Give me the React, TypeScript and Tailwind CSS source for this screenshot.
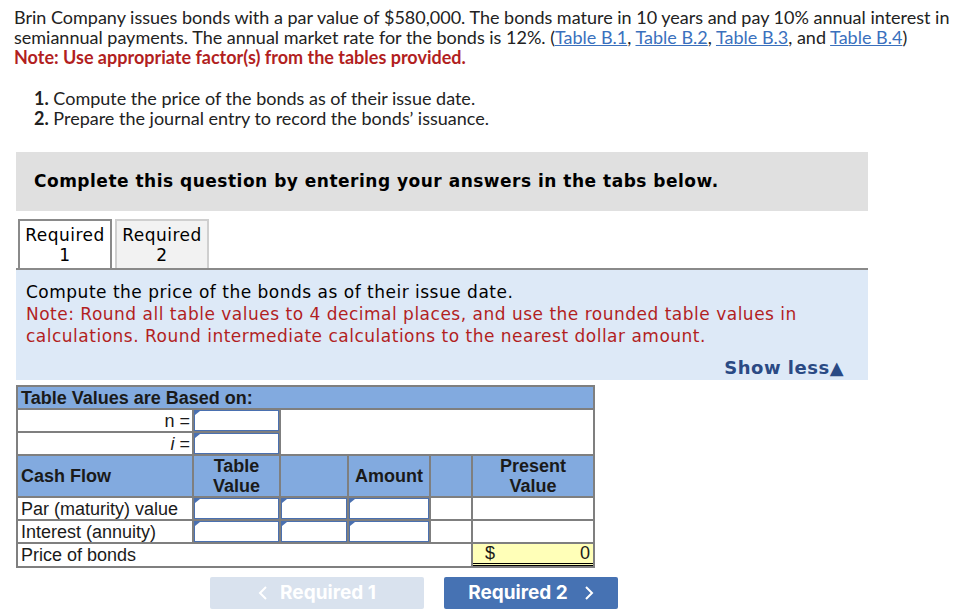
import React from "react";

const Input = () => (
  <div className="relative h-[21px] w-full border border-[#4a70b0] bg-white">
    <span className="absolute left-0 top-0 h-0 w-0 border-l-[5px] border-b-[4px] border-t-0 border-l-[#4a70b0] border-b-transparent border-t-transparent" />
  </div>
);

export default function App() {
  const cell = "border-2 border-[#7f7f7f] p-0";
  const arial = { fontFamily: '"Liberation Sans", Arial, sans-serif' };
  const verdana = { fontFamily: '"DejaVu Sans", Verdana, sans-serif', letterSpacing: "0.5px" };

  return (
    <div className="min-h-[616px] w-[964px] bg-white text-[#222]">
      {/* Question text */}
      <div className="px-[14px] pt-[7px] text-[18px] leading-[20px]" style={{ fontFamily: "Lato, sans-serif" }}>
        <p className="whitespace-nowrap">
          Brin Company issues bonds with a par value of $580,000. The bonds mature in 10 years and pay 10% annual interest in
          <br />
          semiannual payments. The annual market rate for the bonds is 12%. (
          <a className="text-[#3a70bd] underline">Table B.1</a>,{" "}
          <a className="text-[#3a70bd] underline">Table B.2</a>,{" "}
          <a className="text-[#3a70bd] underline">Table B.3</a>, and{" "}
          <a className="text-[#3a70bd] underline">Table B.4</a>)
        </p>
        <p className="font-bold text-[#b21f1f]">Note: Use appropriate factor(s) from the tables provided.</p>

        <ol className="mt-[21px] pl-[20px]">
          <li>
            <span className="font-bold">1.</span> Compute the price of the bonds as of their issue date.
          </li>
          <li>
            <span className="font-bold">2.</span> Prepare the journal entry to record the bonds’ issuance.
          </li>
        </ol>
      </div>

      <div className="pl-4" style={verdana}>
        {/* Instruction box */}
        <div className="mt-[24px] flex h-[59px] w-[852px] items-center bg-[#e0e0e0] pl-[18px] text-[17px] font-bold text-black">
          Complete this question by entering your answers in the tabs below.
        </div>

        {/* Tabs */}
        <div className="mt-[8px] flex w-[852px] gap-[3px] border-b-2 border-[#8a8a8a] pl-[2px]">
          <div className="flex h-[49px] w-[94px] flex-col items-center justify-center border-2 border-b-0 border-[#8a8a8a] bg-white text-[17px] leading-[20px] text-black">
            <span>Required</span>
            <span>1</span>
          </div>
          <div className="flex h-[49px] w-[94px] flex-col items-center justify-center border-2 border-b-0 border-[#cfcfcf] bg-[#f2f2f2] text-[17px] leading-[20px] text-black">
            <span>Required</span>
            <span>2</span>
          </div>
        </div>

        {/* Blue panel */}
        <div className="w-[852px] bg-[#dde9f7] px-[10px] pt-[11px] pb-[1px] text-[17px] leading-[22px]">
          <p className="text-black">Compute the price of the bonds as of their issue date.</p>
          <p className="text-[#b21f1f]">
            Note: Round all table values to 4 decimal places, and use the rounded table values in
            <br />
            calculations. Round intermediate calculations to the nearest dollar amount.
          </p>
          <div className="mt-[10px] flex justify-end pr-[14px] text-[18px] font-bold text-[#2a4a84]">Show less▲</div>
        </div>
      </div>

      {/* Table */}
      <div className="mt-[5px] pl-4" style={arial}>
        <table className="w-[577px] table-fixed border-collapse text-[18px] leading-[20px] text-[#1a1a1a]">
          <colgroup>
            <col className="w-[176px]" />
            <col className="w-[87px]" />
            <col className="w-[68px]" />
            <col className="w-[82px]" />
            <col className="w-[42px]" />
            <col className="w-[122px]" />
          </colgroup>
          <tbody>
            <tr className="h-[23px] bg-[#82aadf]">
              <td colSpan={6} className={`${cell} px-[3px] font-bold`}>
                Table Values are Based on:
              </td>
            </tr>
            <tr className="h-[23px]">
              <td className={`${cell} pr-[2px] text-right`}>n =</td>
              <td className={`${cell}`}>
                <Input />
              </td>
              <td colSpan={4} rowSpan={2} className={cell}></td>
            </tr>
            <tr className="h-[23px]">
              <td className={`${cell} pr-[2px] text-right`}>
                <i>i</i> =
              </td>
              <td className={`${cell}`}>
                <Input />
              </td>
            </tr>
            <tr className="h-[42px] bg-[#82aadf] font-bold">
              <td className={`${cell} px-[3px]`}>Cash Flow</td>
              <td className={`${cell} text-center`}>
                Table
                <br />
                Value
              </td>
              <td className={cell}></td>
              <td className={`${cell} text-center`}>Amount</td>
              <td className={cell}></td>
              <td className={`${cell} text-center`}>
                Present
                <br />
                Value
              </td>
            </tr>
            <tr className="h-[23px]">
              <td className={`${cell} px-[3px] whitespace-nowrap`}>Par (maturity) value</td>
              <td className={cell}>
                <Input />
              </td>
              <td className={cell}>
                <Input />
              </td>
              <td className={cell}>
                <Input />
              </td>
              <td className={cell}></td>
              <td className={cell}></td>
            </tr>
            <tr className="h-[23px]">
              <td className={`${cell} px-[3px]`}>Interest (annuity)</td>
              <td className={cell}>
                <Input />
              </td>
              <td className={cell}>
                <Input />
              </td>
              <td className={cell}>
                <Input />
              </td>
              <td className={cell}></td>
              <td className={cell}></td>
            </tr>
            <tr className="h-[23px]">
              <td colSpan={5} className={`${cell} px-[3px]`}>
                Price of bonds
              </td>
              <td className={`${cell} bg-[#ffffb8]`}>
                <div className="flex justify-between border-b-[3px] border-double border-black pl-[12px] pr-[3px] leading-[19px]">
                  <span>$</span>
                  <span>0</span>
                </div>
              </td>
            </tr>
          </tbody>
        </table>
      </div>

      {/* Navigation buttons */}
      <div className="mt-[9px] flex gap-[20px] pl-[210px]" style={{ fontFamily: "Inter, sans-serif" }}>
        <button className="flex h-[32px] w-[214px] items-center justify-center gap-[12px] rounded-[2px] bg-[#d9e2ee] text-[19px] font-bold text-white">
          <svg width="10" height="16" viewBox="0 0 10 16" fill="none" stroke="white" strokeWidth="2">
            <path d="M8 2 L2 8 L8 14" />
          </svg>
          Required 1
        </button>
        <button className="flex h-[32px] w-[174px] items-center justify-center gap-[16px] rounded-[2px] bg-[#4672b3] text-[19px] font-bold text-white">
          Required 2
          <svg width="10" height="16" viewBox="0 0 10 16" fill="none" stroke="white" strokeWidth="2">
            <path d="M2 2 L8 8 L2 14" />
          </svg>
        </button>
      </div>
    </div>
  );
}
